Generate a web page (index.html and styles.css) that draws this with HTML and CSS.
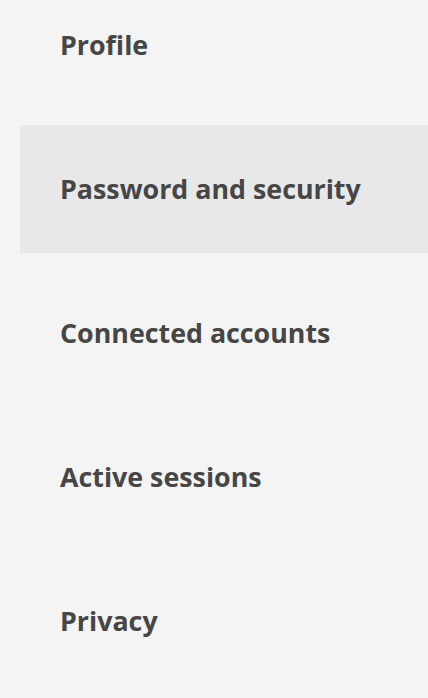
FILE: index.html
```html
<!DOCTYPE html>
<html>
<head>
<meta charset="utf-8">
<link rel="stylesheet" href="styles.css">
</head>
<body>
<nav class="menu">
  <div class="item">Profile</div>
  <div class="item active">Password and security</div>
  <div class="item">Connected accounts</div>
  <div class="item">Active sessions</div>
  <div class="item">Privacy</div>
</nav>
</body>
</html>
```

FILE: styles.css
```css
html, body {
  margin: 0;
  padding: 0;
  background: #f4f4f4;
  height: 100%;
  overflow: hidden;
}
.menu {
  display: flex;
  flex-direction: column;
  gap: 16px;
  margin-top: -19px;
  margin-left: 20px;
}
.item {
  height: 128px;
  display: flex;
  align-items: center;
  padding-left: 40px;
  padding-bottom: 2px;
  box-sizing: border-box;
  font-family: "Open Sans", sans-serif;
  font-weight: 700;
  font-size: 26.8px;
  color: #464646;
}
.item.active {
  background: #e8e8e8;
}
```
